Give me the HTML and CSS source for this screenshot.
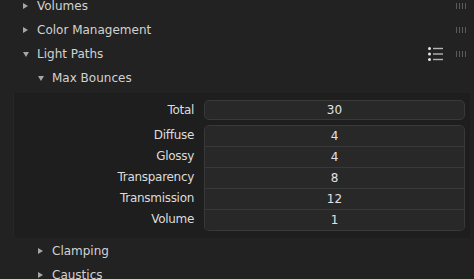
FILE: index.html
```html
<!DOCTYPE html>
<html lang="en">
<head>
    <meta charset="UTF-8">
    <title>Render Properties</title>
    <link rel="stylesheet" href="styles.css">
</head>
<body>
    <div class="props">
        <!-- collapsed panels -->
        <div class="header top">
            <span class="tri right"></span>
            <span class="title">Volumes</span>
            <span class="grip"></span>
        </div>
        <div class="header top">
            <span class="tri right"></span>
            <span class="title">Color Management</span>
            <span class="grip"></span>
        </div>
        <div class="header top">
            <span class="tri down"></span>
            <span class="title">Light Paths</span>
            <svg class="presets" width="16" height="16" viewBox="0 0 16 16">
                <circle cx="1.5" cy="2.5" r="1.5" fill="#e6e6e6"/>
                <circle cx="1.5" cy="8" r="1.5" fill="#e6e6e6"/>
                <circle cx="1.5" cy="13.5" r="1.5" fill="#e6e6e6"/>
                <rect x="5" y="1.8" width="10" height="1.4" fill="#b4b4b4"/>
                <rect x="5" y="7.3" width="10" height="1.4" fill="#b4b4b4"/>
                <rect x="5" y="12.8" width="10" height="1.4" fill="#b4b4b4"/>
            </svg>
            <span class="grip"></span>
        </div>

        <!-- sub panel -->
        <div class="header sub">
            <span class="tri down"></span>
            <span class="title">Max Bounces</span>
        </div>
        <div class="body">
            <div class="prop">
                <div class="label">Total</div>
                <div class="field single">30</div>
            </div>
            <div class="prop">
                <div class="labels">
                    <div class="label">Diffuse</div>
                    <div class="label">Glossy</div>
                    <div class="label">Transparency</div>
                    <div class="label">Transmission</div>
                    <div class="label">Volume</div>
                </div>
                <div class="group">
                    <div class="field">4</div>
                    <div class="field">4</div>
                    <div class="field">8</div>
                    <div class="field">12</div>
                    <div class="field">1</div>
                </div>
            </div>
        </div>

        <div class="header sub">
            <span class="tri right"></span>
            <span class="title">Clamping</span>
        </div>
        <div class="header sub">
            <span class="tri right"></span>
            <span class="title">Caustics</span>
        </div>
    </div>
</body>
</html>
```

FILE: styles.css
```css
html, body {
    margin: 0;
    height: 100%;
    overflow: hidden;
    background-color: #222222;
}

.props {
    margin-top: -6px;
    font-family: "DejaVu Sans", sans-serif;
    color: #d2d2d2;
}

.header {
    display: flex;
    align-items: center;
    height: 24px;
    font-size: 12px;
}

.header.top {
    padding-left: 23px;
}

.header.sub {
    padding-left: 38px;
}

.tri {
    width: 0;
    height: 0;
    margin-right: 9px;
}

.tri.right {
    border-top: 3px solid transparent;
    border-bottom: 3px solid transparent;
    border-left: 5px solid #a6a6a6;
    margin-right: 9px;
}

.tri.down {
    border-left: 3px solid transparent;
    border-right: 3px solid transparent;
    border-top: 5px solid #a6a6a6;
    margin-right: 8px;
}

.title {
    flex: 1;
}

.presets {
    margin-right: 11px;
}

/* drag handle on the right of each panel header */
.grip {
    width: 12px;
    height: 6px;
    margin-right: 7px;
    background-image: radial-gradient(circle, #5a5a5a 0.7px, transparent 1px);
    background-size: 3px 2px;
}

.body {
    margin: 3px 4px 1px 13px;
    padding: 7px 5px 7px 0;
    background-color: #1e1e1e;
    border-left: 1px solid #262626;
    display: flex;
    flex-direction: column;
    gap: 5px;
}

.prop {
    display: grid;
    grid-template-columns: 1fr 261px;
    column-gap: 10px;
}

.label {
    height: 21px;
    line-height: 21px;
    text-align: right;
    font-size: 12px;
    letter-spacing: -0.3px;
    color: #dcdcdc;
}

.prop > .label {
    height: 20px;
    line-height: 20px;
}

.field {
    height: 20px;
    line-height: 20px;
    text-align: center;
    font-size: 12px;
    color: #e2e2e2;
    background-color: #282828;
    border-top: 1px solid #393939;
}

.field.single {
    height: 18px;
    line-height: 18px;
    border: 1px solid #393939;
    border-radius: 5px;
}

.group {
    border: 1px solid #393939;
    border-top: none;
    border-radius: 5px;
    overflow: hidden;
}

.group .field:first-child {
    border-top: 1px solid #393939;
    border-radius: 5px 5px 0 0;
}
```
